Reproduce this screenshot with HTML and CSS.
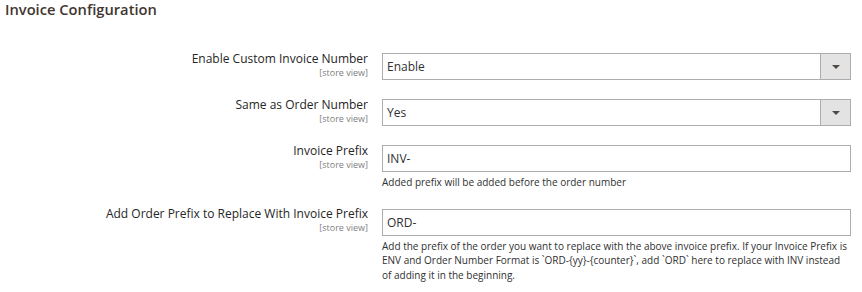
FILE: index.html
```html
<!DOCTYPE html>
<html lang="en">
<head>
  <meta charset="UTF-8" />
  <title>Invoice Configuration</title>
  <link rel="stylesheet" href="styles.css">
</head>
<body>
  <div class="section">
    <h2 class="section-title">Invoice Configuration</h2>
    <div class="config-form">
      <div class="field">
        <label class="label">
          <span>Enable Custom Invoice Number</span>
          <span class="scope">[store view]</span>
        </label>
        <div class="control">
          <div class="select">
            <span class="select-value">Enable</span>
            <span class="select-arrow"></span>
          </div>
        </div>
      </div>
      <div class="field">
        <label class="label">
          <span>Same as Order Number</span>
          <span class="scope">[store view]</span>
        </label>
        <div class="control">
          <div class="select">
            <span class="select-value">Yes</span>
            <span class="select-arrow"></span>
          </div>
        </div>
      </div>
      <div class="field">
        <label class="label">
          <span>Invoice Prefix</span>
          <span class="scope">[store view]</span>
        </label>
        <div class="control">
          <div class="input">INV-</div>
          <p class="note">Added prefix will be added before the order number</p>
        </div>
      </div>
      <div class="field">
        <label class="label">
          <span>Add Order Prefix to Replace With Invoice Prefix</span>
          <span class="scope">[store view]</span>
        </label>
        <div class="control">
          <div class="input">ORD-</div>
          <p class="note">Add the prefix of the order you want to replace with the above invoice prefix. If your Invoice Prefix is ENV and Order Number Format is `ORD-{yy}-{counter}`, add `ORD` here to replace with INV instead of adding it in the beginning.</p>
        </div>
      </div>
    </div>
  </div>
</body>
</html>
```

FILE: styles.css
```css
body {
  margin: 0;
  background: #fff;
  font-family: "Open Sans", "Liberation Sans", sans-serif;
  color: #303030;
}
.section {
  padding: 0 11px 0 5px;
}
.section-title {
  margin: 0;
  font-size: 14.7px;
  font-weight: 600;
  line-height: 18px;
  color: #41362f;
}
.config-form {
  padding-top: 35px;
}
.field {
  display: grid;
  grid-template-columns: 363px 1fr;
  column-gap: 14px;
  margin-bottom: 19px;
}
.label {
  display: flex;
  flex-direction: column;
  align-items: flex-end;
  margin-top: -2.5px;
  text-align: right;
  font-size: 12px;
  font-weight: 500;
  line-height: 16px;
  color: #262626;
}
.scope {
  margin-top: 0.3px;
  font-size: 9px;
  font-weight: 400;
  line-height: 12.4px;
  color: #808080;
}
.select,
.input {
  display: flex;
  align-items: center;
  height: 27px;
  box-sizing: border-box;
  border: 1px solid #adadad;
  background: #fff;
  font-size: 12px;
  color: #303030;
}
.input {
  padding-left: 4px;
}
.select-value {
  flex: 1;
  padding-left: 4px;
}
.select-arrow {
  position: relative;
  align-self: stretch;
  width: 29px;
  background: #e3e3e3;
  border-left: 1px solid #adadad;
}
.select-arrow::after {
  content: "";
  position: absolute;
  left: 50%;
  top: 50%;
  margin: -2px 0 0 -4px;
  border-left: 4px solid transparent;
  border-right: 4px solid transparent;
  border-top: 4px solid #514943;
}
.note {
  margin: 3px 0 0;
  font-size: 10px;
  line-height: 14.5px;
  color: #303030;
}
```
